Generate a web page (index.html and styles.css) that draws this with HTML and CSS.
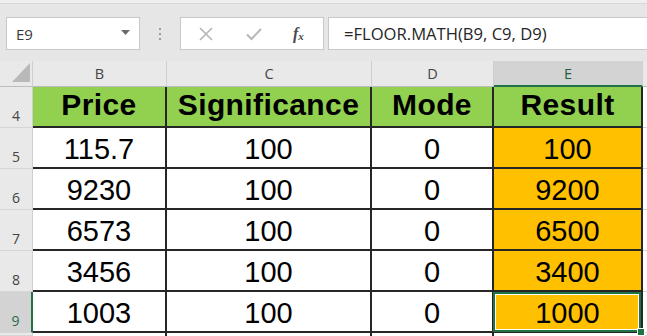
FILE: index.html
```html
<!DOCTYPE html>
<html lang="en">
<head>
    <meta charset="UTF-8">
    <title>FLOOR.MATH</title>
    <link rel="stylesheet" href="styles.css">
</head>
<body>
    <div class="workbook">
        <div class="formula-bar">
            <div class="name-box">
                <span>E9</span>
                <svg class="name-arrow" width="9" height="5" viewBox="0 0 9 5"><polygon points="0,0 9,0 4.5,5" fill="#6b6b6b"/></svg>
            </div>
            <div class="grip"><i></i><i></i><i></i></div>
            <div class="func-buttons">
                <svg class="btn-icon" width="14" height="14" viewBox="0 0 14 14"><path d="M1 1 L13 13 M13 1 L1 13" stroke="#b4b4b4" stroke-width="1.6" fill="none"/></svg>
                <svg class="btn-icon" width="16" height="14" viewBox="0 0 16 14"><path d="M1 7.5 L5.5 12 L15 2" stroke="#b8b8b8" stroke-width="2" fill="none"/></svg>
                <span class="fx">f<sub>x</sub></span>
            </div>
            <div class="formula-input">=FLOOR.MATH(B9, C9, D9)</div>
        </div>

        <div class="sheet">
            <!-- column headers -->
            <div class="corner">
                <svg width="18" height="19" viewBox="0 0 18 19"><polygon points="18,0 18,19 0,19" fill="#b9b9b9"/></svg>
            </div>
            <div class="col-head">B</div>
            <div class="col-head">C</div>
            <div class="col-head">D</div>
            <div class="col-head active">E</div>
            <div class="col-head rest"></div>

            <div class="row-head">4</div>
            <div class="cell head">Price</div>
            <div class="cell head">Significance</div>
            <div class="cell head">Mode</div>
            <div class="cell head">Result</div>
            <div class="gap-cell"></div>

            <div class="row-head">5</div>
            <div class="cell">115.7</div>
            <div class="cell">100</div>
            <div class="cell">0</div>
            <div class="cell result">100</div>
            <div class="gap-cell"></div>

            <div class="row-head">6</div>
            <div class="cell">9230</div>
            <div class="cell">100</div>
            <div class="cell">0</div>
            <div class="cell result">9200</div>
            <div class="gap-cell"></div>

            <div class="row-head">7</div>
            <div class="cell">6573</div>
            <div class="cell">100</div>
            <div class="cell">0</div>
            <div class="cell result">6500</div>
            <div class="gap-cell"></div>

            <div class="row-head">8</div>
            <div class="cell">3456</div>
            <div class="cell">100</div>
            <div class="cell">0</div>
            <div class="cell result">3400</div>
            <div class="gap-cell"></div>

            <div class="row-head active">9</div>
            <div class="cell">1003</div>
            <div class="cell">100</div>
            <div class="cell">0</div>
            <div class="cell result selected">1000</div>
            <div class="gap-cell"></div>

            <div class="row-head"></div>
            <div class="cell tail"></div>
            <div class="cell tail"></div>
            <div class="cell tail"></div>
            <div class="cell tail"></div>
            <div class="gap-cell"></div>
        </div>
    </div>
</body>
</html>
```

FILE: styles.css
```css
body {
    margin: 0;
    width: 647px;
    height: 336px;
    overflow: hidden;
    background-color: #fff;
    font-family: 'Open Sans', 'DejaVu Sans', sans-serif;
}
.workbook {
    display: flex;
    flex-direction: column;
    height: 336px;
}
.formula-bar {
    height: 63px;
    box-sizing: border-box;
    background-color: #e6e6e6;
    border-top: 3px solid #efefef;
    box-shadow: inset 0 1px 0 #d8d8d8;
    display: flex;
    align-items: flex-start;
    padding: 14px 0 0 6px;
}
.name-box {
    width: 134px;
    height: 33px;
    box-sizing: border-box;
    background-color: #fff;
    border: 1px solid #c8c8c8;
    display: flex;
    align-items: center;
    justify-content: space-between;
    padding: 0 9px 0 9px;
    font-size: 15px;
    color: #3a3a3a;
}
.name-arrow {
    margin-top: -2px;
}
.grip {
    width: 40px;
    height: 33px;
    display: flex;
    flex-direction: column;
    align-items: center;
    justify-content: center;
    gap: 3px;
}
.grip i {
    width: 2px;
    height: 2px;
    background-color: #9c9c9c;
}
.func-buttons {
    width: 144px;
    height: 33px;
    box-sizing: border-box;
    background-color: #fff;
    border: 1px solid #c8c8c8;
    display: flex;
    align-items: center;
    padding-left: 18px;
}
.func-buttons .btn-icon:nth-child(2) {
    margin-left: 33px;
}
.fx {
    margin-left: 31px;
    font-family: 'Liberation Serif', serif;
    font-style: italic;
    font-weight: bold;
    font-size: 16px;
    color: #4a4a4a;
}
.fx sub {
    font-size: 11px;
    vertical-align: -1px;
}
.formula-input {
    flex: 1;
    height: 33px;
    margin-left: 4px;
    box-sizing: border-box;
    background-color: #fff;
    border: 1px solid #c8c8c8;
    border-right: none;
    display: flex;
    align-items: center;
    padding-left: 15px;
    font-size: 16.6px;
    color: #262626;
}

/* sheet grid */
.sheet {
    flex: 1;
    display: grid;
    grid-template-columns: 33px 134px 205px 122px 149px 1fr;
    grid-template-rows: 26px repeat(6, 41px) 1fr;
}
.corner, .col-head, .row-head {
    background-color: #e9e9e9;
    box-sizing: border-box;
    color: #444;
}
.corner {
    border-right: 1px solid #cfcfcf;
    border-bottom: 1px solid #bdbdbd;
    display: flex;
    align-items: flex-end;
    justify-content: flex-end;
    padding: 0 2px 4px 0;
}
.col-head {
    border-right: 1px solid #cfcfcf;
    border-bottom: 1px solid #bdbdbd;
    display: flex;
    align-items: center;
    justify-content: center;
    font-size: 14.5px;
}
.col-head.active {
    background-color: #d3d3d3;
    border-bottom: 2px solid #217346;
    color: #1e5e3a;
}
.col-head.rest {
    border-right: none;
}
.row-head {
    border-right: 1px solid #cfcfcf;
    border-bottom: 1px solid #d5d5d5;
    display: flex;
    align-items: flex-end;
    justify-content: center;
    padding-bottom: 2px;
    font-size: 14px;
}
.row-head.active {
    background-color: #d3d3d3;
    border-right: 2px solid #217346;
    color: #1e6e4a;
}
.cell {
    position: relative;
    box-sizing: border-box;
    border-right: 2px solid #262626;
    border-bottom: 2px solid #262626;
    display: flex;
    align-items: flex-end;
    justify-content: center;
    padding-bottom: 3px;
    font-family: 'Liberation Sans', Arial, sans-serif;
    font-size: 29px;
    line-height: 1;
    color: #000;
}
.cell.head {
    background-color: #92d050;
    font-weight: bold;
    font-size: 30px;
    letter-spacing: 0.4px;
    padding-bottom: 6px;
}
.cell.result {
    background-color: #ffc000;
}
.cell.tail {
    border-bottom: none;
}
.gap-cell {
    border-bottom: 1px solid #d5d5d5;
}

/* active cell frame and fill handle */
.cell.selected::after {
    content: '';
    position: absolute;
    top: 0;
    left: -1px;
    right: 0;
    bottom: -1px;
    border: 2px solid #217346;
    box-shadow: inset 0 0 0 1px #fff;
}
.cell.selected::before {
    content: '';
    position: absolute;
    right: -4px;
    bottom: -5px;
    width: 6px;
    height: 6px;
    background-color: #217346;
    border: 1px solid #fff;
    z-index: 1;
}
```
